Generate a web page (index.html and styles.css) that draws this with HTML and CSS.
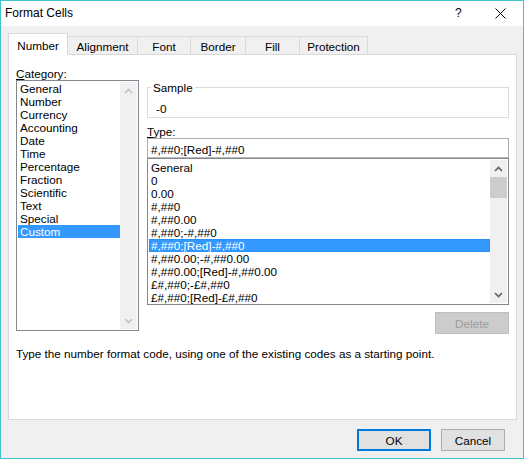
FILE: index.html
```html
<!DOCTYPE html>
<html>
<head>
<meta charset="utf-8">
<link rel="stylesheet" href="styles.css">
</head>
<body>
<div class="window">
  <div class="titlebar">
    <span class="title">Format Cells</span>
    <span class="help">?</span>
    <span class="close"><svg width="11" height="11" viewBox="0 0 11 11"><path d="M0.5 0.5L10.5 10.5M10.5 0.5L0.5 10.5" stroke="#000" stroke-width="1" fill="none"/></svg></span>
  </div>
  <div class="main">
    <div class="tabs">
      <div class="tab active t-number">Number</div>
      <div class="tab t-align">Alignment</div>
      <div class="tab t-font">Font</div>
      <div class="tab t-border">Border</div>
      <div class="tab t-fill">Fill</div>
      <div class="tab t-prot">Protection</div>
    </div>
    <div class="panel">
      <div class="cols">
        <div class="col-left">
          <div class="label"><u>C</u>ategory:</div>
          <div class="listbox cat">
            <div class="items">
              <div class="item">General</div>
              <div class="item">Number</div>
              <div class="item">Currency</div>
              <div class="item">Accounting</div>
              <div class="item">Date</div>
              <div class="item">Time</div>
              <div class="item">Percentage</div>
              <div class="item">Fraction</div>
              <div class="item">Scientific</div>
              <div class="item">Text</div>
              <div class="item">Special</div>
              <div class="item sel">Custom</div>
            </div>
            <div class="sbar disabled">
              <div class="sbtn"><svg width="9" height="6" viewBox="0 0 9 6"><path d="M1 5L4.5 1.5L8 5" stroke="currentColor" stroke-width="1.6" fill="none"/></svg></div>
              <div class="track"></div>
              <div class="sbtn"><svg width="9" height="6" viewBox="0 0 9 6"><path d="M1 1L4.5 4.5L8 1" stroke="currentColor" stroke-width="1.6" fill="none"/></svg></div>
            </div>
          </div>
        </div>
        <div class="col-right">
          <div class="group">
            <span class="legend">Sample</span>
            <div class="sample">-0</div>
          </div>
          <div class="label type-label"><u>T</u>ype:</div>
          <div class="input">#,##0;[Red]-#,##0</div>
          <div class="listbox types">
            <div class="items">
              <div class="item">General</div>
              <div class="item">0</div>
              <div class="item">0.00</div>
              <div class="item">#,##0</div>
              <div class="item">#,##0.00</div>
              <div class="item">#,##0;-#,##0</div>
              <div class="item sel focus">#,##0;[Red]-#,##0</div>
              <div class="item">#,##0.00;-#,##0.00</div>
              <div class="item">#,##0.00;[Red]-#,##0.00</div>
              <div class="item">£#,##0;-£#,##0</div>
              <div class="item">£#,##0;[Red]-£#,##0</div>
            </div>
            <div class="sbar">
              <div class="sbtn"><svg width="9" height="6" viewBox="0 0 9 6"><path d="M1 5L4.5 1.5L8 5" stroke="currentColor" stroke-width="1.6" fill="none"/></svg></div>
              <div class="track"><div class="thumb"></div></div>
              <div class="sbtn"><svg width="9" height="6" viewBox="0 0 9 6"><path d="M1 1L4.5 4.5L8 1" stroke="currentColor" stroke-width="1.6" fill="none"/></svg></div>
            </div>
          </div>
          <div class="btnrow">
            <div class="btn delete">Delete</div>
          </div>
        </div>
      </div>
      <div class="desc">Type the number format code, using one of the existing codes as a starting point.</div>
    </div>
    <div class="footer">
      <div class="btn ok">OK</div>
      <div class="btn cancel">Cancel</div>
    </div>
  </div>
</div>
</body>
</html>
```
FILE: styles.css
```css
html, body {
  margin: 0;
  padding: 0;
  background: #ffffff;
}
body {
  font-family: "Liberation Sans", Arial, sans-serif;
  font-size: 11.7px;
  color: #000;
}
* { box-sizing: border-box; }

.window {
  width: 524px;
  height: 459px;
  border: 1px solid #45c3ca;
  background: #f0f0f0;
  display: flex;
  flex-direction: column;
}
.titlebar {
  height: 25px;
  background: #fff;
  display: flex;
  align-items: center;
  padding-left: 4px;
  flex: none;
}
.title {
  flex: 1;
  font-size: 12px;
  line-height: 15px;
}
.help {
  width: 10px;
  margin-right: 30px;
  font-size: 12px;
  line-height: 15px;
}
.close {
  display: flex;
  margin-right: 17px;
}

.main {
  padding: 7px 0 0 7px;
  flex: 1;
}
.tabs {
  display: flex;
  align-items: flex-end;
  height: 21px;
}
.tab {
  height: 18px;
  border-top: 1px solid #d9d9d9;
  border-right: 1px solid #d9d9d9;
  background: #f0f0f0;
  display: flex;
  align-items: center;
  justify-content: center;
  line-height: 15px;
  padding-top: 1px;
}
.tab.active {
  height: 22px;
  margin-bottom: -1px;
  border-left: 1px solid #d9d9d9;
  background: #fff;
  position: relative;
  z-index: 1;
  padding-top: 1px;
  padding-bottom: 0;
}
.t-number { width: 60px; }
.t-align { width: 70px; }
.t-font { width: 53px; }
.t-border { width: 55px; }
.t-fill { width: 54px; }
.t-prot { width: 68px; }

.panel {
  width: 509px;
  height: 366px;
  border: 1px solid #d9d9d9;
  background: #fff;
  padding: 10px 7px 0 7px;
}
.cols {
  display: flex;
  gap: 8px;
}
.col-left {
  width: 123px;
  display: flex;
  flex-direction: column;
}
.col-right {
  width: 362px;
  display: flex;
  flex-direction: column;
}
.label {
  line-height: 15px;
  height: 15px;
  padding-top: 1px;
}
.listbox {
  border: 1px solid #828790;
  padding: 1px;
  display: flex;
  background: #fff;
  overflow: hidden;
}
.listbox.cat {
  height: 251px;
}
.listbox.types {
  height: 147px;
}
.items {
  flex: 1;
  display: flex;
  flex-direction: column;
}
.listbox.types .items {
  padding-top: 1px;
}
.item {
  height: 13px;
  line-height: 14px;
  padding-left: 2px;
  white-space: nowrap;
}
.item.sel {
  background: #3399ff;
  color: #fff;
}
.item.focus {
  outline: 1px dotted #a06a3a;
  outline-offset: -1px;
}
.sbar {
  width: 17px;
  background: #f0f0f0;
  display: flex;
  flex-direction: column;
  color: #606060;
}
.sbar.disabled {
  color: #c2c2c2;
}
.sbtn {
  height: 17px;
  display: flex;
  align-items: center;
  justify-content: center;
  flex: none;
}
.track {
  flex: 1;
}
.thumb {
  height: 21px;
  background: #cdcdcd;
}

.group {
  margin-top: 22px;
  height: 31px;
  border: 1px solid #dcdcdc;
  position: relative;
  padding: 13px 0 0 8px;
}
.legend {
  position: absolute;
  left: 3px;
  top: -8px;
  background: #fff;
  padding: 0 2px 0 2px;
  line-height: 15px;
}
.sample {
  line-height: 15px;
}
.type-label {
  margin-top: 5px;
}
.input {
  height: 20px;
  border: 1px solid #abadb3;
  border-bottom-color: #b9b9b9;
  padding-left: 3px;
  line-height: 19px;
  padding-top: 1px;
}
.btnrow {
  display: flex;
  justify-content: flex-end;
  margin-top: 7px;
}
.btn {
  height: 22px;
  display: flex;
  align-items: center;
  justify-content: center;
  background: #e1e1e1;
  border: 1px solid #adadad;
}
.btn.delete {
  width: 74px;
  background: #cccccc;
  border-color: #bfbfbf;
  color: #9d9d9d;
}
.desc {
  margin-top: 12px;
  line-height: 15px;
}
.footer {
  display: flex;
  justify-content: flex-end;
  gap: 10px;
  margin-top: 9px;
  padding-right: 18px;
}
.btn.ok {
  width: 74px;
  border: 2px solid #0078d7;
}
.btn.cancel {
  width: 64px;
}
```
